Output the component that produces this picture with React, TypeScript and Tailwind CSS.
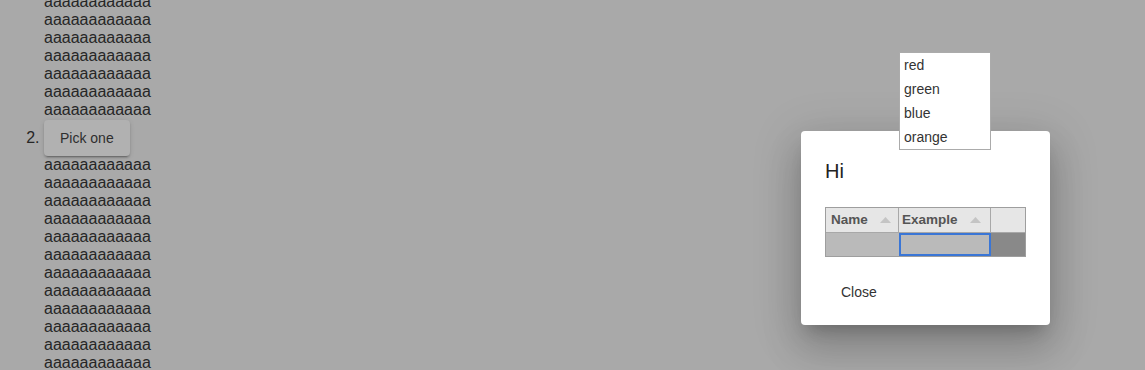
import React from "react";

const LINE = "aaaaaaaaaaaa";
const COLORS = ["red", "green", "blue", "orange"];

function Lines({ count }: { count: number }) {
  return (
    <>
      {Array.from({ length: count }).map((_, i) => (
        <div key={i}>{LINE}</div>
      ))}
    </>
  );
}

function SortArrow() {
  return (
    <svg width="11" height="6" viewBox="0 0 11 6" className="ml-3 shrink-0">
      <path d="M0 6 L5.5 0 L11 6 Z" fill="#c4c4c4" />
    </svg>
  );
}

export default function App() {
  return (
    <div className="relative h-[370px] w-full overflow-hidden bg-[#a9a9a9] font-['Liberation_Sans',Arial,sans-serif] text-[#262626]">
      {/* page behind the modal */}
      <ol className="-mt-[241px] list-decimal pl-[44px] text-[16px] leading-[18px]">
        <li>
          <Lines count={20} />
        </li>
        <li>
          <button
            type="button"
            className="my-px h-[36px] rounded bg-[#b1b1b1] px-4 text-[14px] text-[#2e2e2e] shadow-[0_3px_1px_-2px_rgba(0,0,0,0.2),0_2px_2px_0_rgba(0,0,0,0.14),0_1px_5px_0_rgba(0,0,0,0.12)]"
          >
            Pick one
          </button>
          <div className="-mt-px">
            <Lines count={12} />
          </div>
        </li>
      </ol>

      {/* dialog */}
      <div className="absolute left-[801px] top-[131px] flex w-[249px] flex-col rounded bg-white px-6 pb-[15px] pt-[26px] shadow-[0_11px_15px_-7px_rgba(0,0,0,0.2),0_24px_38px_3px_rgba(0,0,0,0.14),0_9px_46px_8px_rgba(0,0,0,0.12)]">
        <h2 className="text-[20px] leading-[28px] text-[#222]">Hi</h2>

        <div className="mt-[22px] border border-[#9e9e9e]">
          <div className="flex h-[24px] bg-[#e6e6e6] text-[13.5px] font-bold text-[#555]">
            <div className="flex w-[73px] items-center border-r border-[#a8a8a8] pl-[5px]">
              Name
              <SortArrow />
            </div>
            <div className="flex w-[92px] items-center border-r border-[#a8a8a8] pl-[3px]">
              Example
              <SortArrow />
            </div>
            <div className="flex-1" />
          </div>
          <div className="flex h-[24px] border-t border-[#a8a8a8]">
            <div className="w-[73px] bg-[#bababa]" />
            <div className="w-[92px] border-2 border-[#3a76d6] bg-[#bababa]" />
            <div className="flex-1 bg-[#898989]" />
          </div>
        </div>

        <div className="mt-[17px] flex">
          <button
            type="button"
            className="h-9 rounded px-4 text-[14px] text-[#333]"
          >
            Close
          </button>
        </div>
      </div>

      {/* open dropdown */}
      <ul className="absolute left-[899px] top-[52px] w-[92px] border border-[#ababab] bg-white text-[14px] text-[#333]">
        {COLORS.map((c) => (
          <li key={c} className="flex h-[24px] items-center pl-1">
            {c}
          </li>
        ))}
      </ul>
    </div>
  );
}
